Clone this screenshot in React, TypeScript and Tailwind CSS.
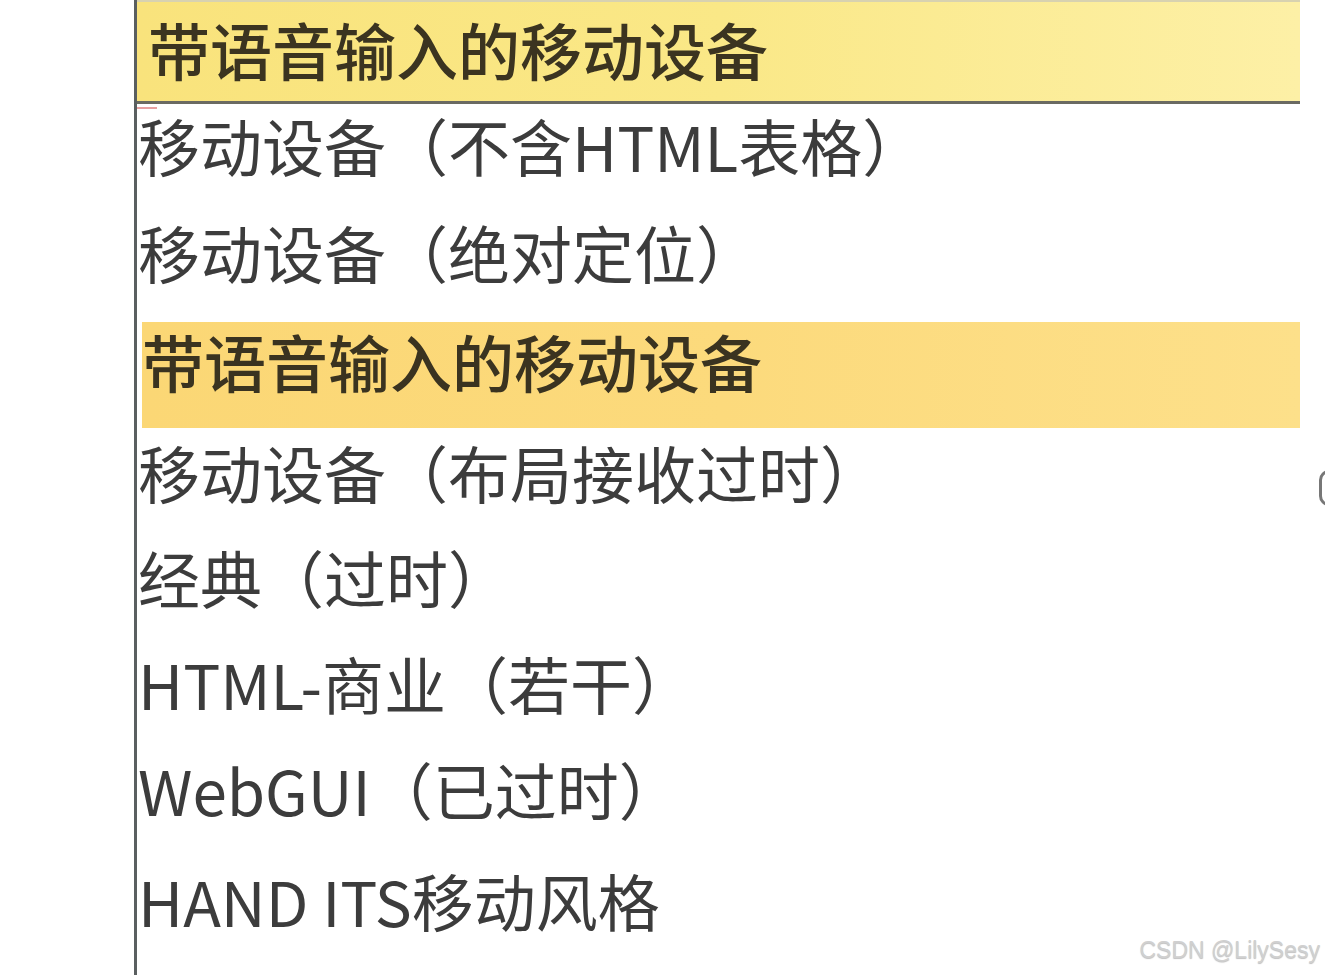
import React from "react";

const font = { fontFamily: '"Noto Sans CJK SC", "Noto Sans", sans-serif' };

type Row = { text: string; h: number; pb: number; hl?: boolean };

const rows: Row[] = [
  { text: "移动设备（不含HTML表格）", h: 98, pb: 16 },
  { text: "移动设备（绝对定位）", h: 120, pb: 20 },
  { text: "带语音输入的移动设备", h: 106, pb: 28, hl: true },
  { text: "移动设备（布局接收过时）", h: 100, pb: 12 },
  { text: "经典（过时）", h: 104, pb: 6 },
  { text: "HTML-商业（若干）", h: 108, pb: 6 },
  { text: "WebGUI（已过时）", h: 105, pb: 8 },
  { text: "HAND ITS移动风格", h: 115, pb: 6 },
];

export default function App() {
  return (
    <div className="relative w-[1325px] h-[975px] overflow-hidden bg-white" style={font}>
      <div className="ml-[134px] w-[1166px] h-[975px] border-l-[3px] border-[#5a5f60] flex flex-col">
        <div className="h-[104px] shrink-0 border-t-2 border-b-[3px] border-t-[#d8d2b0] border-b-[#6a6a62] bg-gradient-to-r from-[#f9e37c] via-[#fae887] to-[#fdf0a6] flex items-center pl-[11px] pb-[6px]">
          <span className="text-[62px] leading-none font-medium text-[#3b3420]">带语音输入的移动设备</span>
        </div>
        <div className="relative">
          <div className="absolute left-0 top-[3px] w-[20px] h-[2px] bg-[#e8a0a0]" />
        </div>
        {rows.map((r, i) => (
          <div
            key={i}
            className={
              "shrink-0 flex items-center " +
              (r.hl ? "bg-gradient-to-r from-[#fbd775] via-[#fcda7c] to-[#fde08a] ml-[5px] pl-0" : "pl-[1px]")
            }
            style={{ height: r.h, paddingBottom: r.pb }}
          >
            <span className={"text-[62px] leading-none whitespace-nowrap " + (r.hl ? "font-medium text-[#3a3320]" : "text-[#3c3c3c]")}>
              {r.text}
            </span>
          </div>
        ))}
      </div>
      <div className="absolute left-[1319px] top-[470px] w-[20px] h-[36px] rounded-full border-[3px] border-[#777]" />
      <div
        className="absolute right-[5px] bottom-[8px] text-[23px] text-[#d0d0d0] [text-shadow:0_1px_1px_rgba(0,0,0,0.25)]"
        style={{ fontFamily: '"Liberation Sans", Arial, sans-serif' }}
      >
        CSDN @LilySesy
      </div>
    </div>
  );
}
